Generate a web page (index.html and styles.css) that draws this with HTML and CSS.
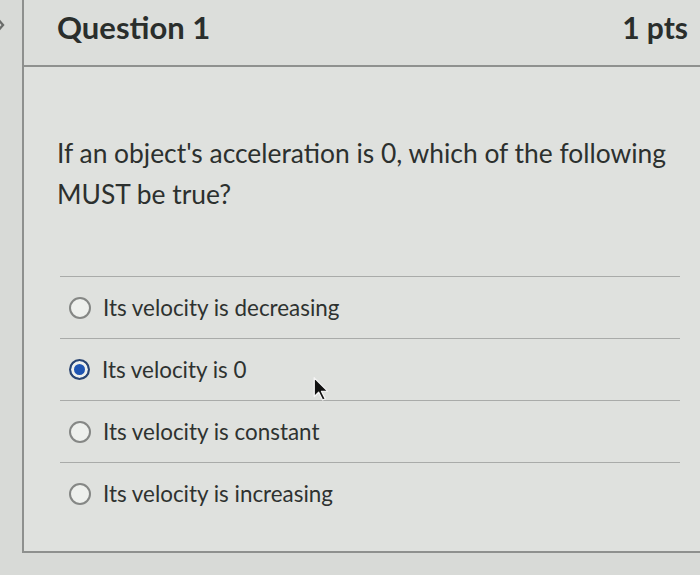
FILE: index.html
```html
<!DOCTYPE html>
<html lang="en">
<head>
<meta charset="utf-8">
<title>Question 1</title>
<link rel="stylesheet" href="styles.css">
</head>
<body>
<div class="page">
  <div class="gutter">
    <svg class="chev" width="10" height="18" viewBox="0 0 10 18"><path d="M1 2 L7 9 L1 16" fill="none" stroke="#6a6c6a" stroke-width="2.4"/></svg>
  </div>
  <div class="card">
    <div class="header">
      <span class="title">Question 1</span>
      <span class="pts">1 pts</span>
    </div>
    <div class="content">
      <p class="question">If an object's acceleration is 0, which of the following MUST be true?</p>
      <div class="answers">
        <div class="answer"><span class="radio"></span><span class="label">Its velocity is decreasing</span></div>
        <div class="answer"><span class="radio checked"></span><span class="label">Its velocity is 0</span></div>
        <div class="answer"><span class="radio"></span><span class="label">Its velocity is constant</span></div>
        <div class="answer"><span class="radio"></span><span class="label">Its velocity is increasing</span></div>
      </div>
    </div>
  </div>
  <svg class="cursor" width="20" height="30" viewBox="0 0 18 26"><path d="M2 2 L2 19 L6 15 L9.5 22 L12 21 L8.6 14.2 L14 14 Z" fill="#111" stroke="#f4f4f4" stroke-width="1.2" stroke-linejoin="round"/></svg>
</div>
</body>
</html>
```

FILE: styles.css
```css
html, body {
  margin: 0;
  padding: 0;
}
body {
  background: #d8dad7;
  font-family: Lato, "Open Sans", sans-serif;
  color: #2e3230;
  width: 700px;
  height: 575px;
  overflow: hidden;
}
.page {
  position: relative;
  display: flex;
  height: 575px;
}
.gutter {
  width: 22px;
  flex: none;
  overflow: hidden;
  padding-top: 16px;
  box-sizing: border-box;
}
.chev {
  display: block;
  margin-left: -4px;
}
.card {
  flex: 1;
  height: 553px;
  background: #dfe1de;
  border-left: 2px solid #8e908e;
  border-bottom: 2px solid #8e908e;
  box-sizing: border-box;
  display: flex;
  flex-direction: column;
}
.header {
  height: 67px;
  box-sizing: border-box;
  border-bottom: 2px solid #8f918f;
  padding: 9px 12px 0 33px;
  display: flex;
  justify-content: space-between;
  align-items: flex-start;
  background: #dcdedb;
}
.title, .pts {
  font-size: 31px;
  font-weight: 700;
  line-height: 37px;
  color: #2a2e2c;
}
.pts {
  font-size: 30px;
}
.content {
  padding: 66px 20px 0 33px;
}
.question {
  margin: 0;
  font-size: 26.4px;
  line-height: 41px;
  max-width: 630px;
  color: #2c302e;
}
.answers {
  margin-top: 61px;
  margin-left: 3px;
}
.answer {
  height: 62px;
  border-top: 1px solid #a9aba9;
  box-sizing: border-box;
  display: flex;
  align-items: center;
  padding-left: 9px;
  gap: 12px;
}
.radio {
  width: 18px;
  height: 18px;
  border: 2px solid #858785;
  border-radius: 50%;
  background: #eef0ed;
  flex: none;
  box-sizing: content-box;
}
.radio.checked {
  border: 2.5px solid #2a4470;
  background: #1f55b3;
  box-shadow: inset 0 0 0 3px #eef0ed;
  width: 17px;
  height: 17px;
}
.label {
  font-size: 22.4px;
  line-height: 28px;
  color: #2e3230;
}
.cursor {
  position: absolute;
  left: 312px;
  top: 375px;
}
```
